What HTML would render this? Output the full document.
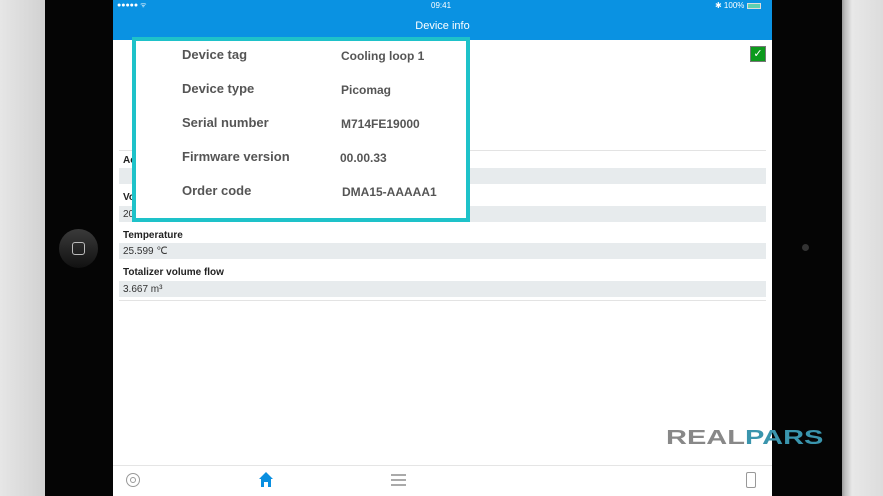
<!DOCTYPE html>
<html><head><style>
*{margin:0;padding:0;box-sizing:border-box}
body{width:883px;height:496px;overflow:hidden;position:relative;background:#d8d8d8;font-family:"Liberation Sans",sans-serif}
.bgl{position:absolute;left:0;top:0;width:50px;height:496px;background:linear-gradient(90deg,#e6e6e6,#cfcfcf)}
.bgr{position:absolute;left:842px;top:0;width:41px;height:496px;background:linear-gradient(90deg,#9a9a9a 0,#bdbdbd 3px,#e8e8e8 10px,#dcdcdc)}
.bez{position:absolute;left:45px;top:0;width:797px;height:496px;background:#050505}
.scr{position:absolute;left:113px;top:0;width:659px;height:496px;background:#fff;overflow:hidden}
.hdr{position:absolute;left:0;top:0;width:659px;height:40px;background:#0a92e2;color:#fff}
.lbl{position:absolute;left:10px;font-size:10px;color:#222;font-weight:bold}
.fld{position:absolute;left:6px;width:647px;height:16px;background:#e7ebed;font-size:10px;color:#333;padding:3px 4px}
.box{position:absolute;left:132px;top:37px;width:338px;height:185px;border:4px solid #1ec2c9;background:#fff}
.box div{position:absolute;font-size:13px;font-weight:bold;color:#555}
</style></head><body>
<div class="bgl"></div><div class="bgr"></div><div class="bez"></div>
<div style="position:absolute;left:59px;top:229px;width:39px;height:39px;border-radius:50%;background:linear-gradient(#3a3a3a,#111);"></div>
<div style="position:absolute;left:72px;top:242px;width:13px;height:13px;border:1.5px solid #bbb;border-radius:3px"></div>
<div style="position:absolute;left:802px;top:244px;width:7px;height:7px;border-radius:50%;background:#333"></div>
<div class="scr">
<div class="hdr">
<div style="position:absolute;left:4px;top:1px;font-size:7px">●●●●● ᯤ</div>
<div style="position:absolute;left:318px;top:1px;font-size:8px">09:41</div>
<div style="position:absolute;left:602px;top:1px;font-size:8px">✱ 100% <span style="display:inline-block;width:14px;height:6px;background:#5fd0b0;border:1px solid #ddd;vertical-align:middle"></span></div>
<div style="position:absolute;left:0;width:659px;top:20px;text-align:center;font-size:11px">Device info</div>
</div>
<div style="position:absolute;left:637px;top:46px;width:16px;height:16px;background:#0c9a1c;border:1px solid #777;color:#fff;font-size:11px;text-align:center;line-height:14px">✓</div>
<div style="position:absolute;left:6px;top:150px;width:647px;height:1px;background:#e3e3e3"></div>
<div class="lbl" style="top:155px">Ac</div><div class="fld" style="top:168px"></div>
<div class="lbl" style="top:192px">Vo</div><div class="fld" style="top:206px">20</div>
<div class="lbl" style="top:230px">Temperature</div><div class="fld" style="top:243px">25.599 ℃</div>
<div class="lbl" style="top:267px">Totalizer volume flow</div><div class="fld" style="top:281px">3.667 m³</div>
<div style="position:absolute;left:6px;top:300px;width:647px;height:1px;background:#e3e3e3"></div>
<div style="position:absolute;left:0;top:465px;width:659px;height:1px;background:#e5e5e5"></div>
<div style="position:absolute;left:13px;top:473px;width:14px;height:14px;border:1.5px solid #999;border-radius:50%"></div>
<div style="position:absolute;left:17px;top:477px;width:6px;height:6px;border:1.5px solid #999;border-radius:50%"></div>
<svg style="position:absolute;left:146px;top:472px" width="14" height="15"><path d="M7 0L0 7h2v8h3v-5h4v5h3V7h2z" fill="#0a8fe0"/></svg>
<div style="position:absolute;left:278px;top:474px;width:15px;height:2px;background:#aaa;box-shadow:0 5px 0 #aaa,0 10px 0 #aaa"></div>
<div style="position:absolute;left:633px;top:472px;width:10px;height:16px;border:1.5px solid #999;border-radius:2px"></div>
</div>
<div style="position:absolute;left:666px;top:428px;font-size:20px;line-height:20px;font-weight:bold;white-space:nowrap;transform-origin:0 0;transform:scaleX(1.45)"><span style="color:#888">REAL</span><span style="color:#3a95ad">PARS</span></div>
<div class="box">
<div style="left:46px;top:6px">Device tag</div><div style="left:205px;top:8px;font-size:12px">Cooling loop 1</div>
<div style="left:46px;top:40px">Device type</div><div style="left:205px;top:42px;font-size:12px">Picomag</div>
<div style="left:46px;top:74px">Serial number</div><div style="left:205px;top:76px;font-size:12px">M714FE19000</div>
<div style="left:46px;top:108px">Firmware version</div><div style="left:204px;top:110px;font-size:12px">00.00.33</div>
<div style="left:46px;top:142px">Order code</div><div style="left:206px;top:144px;font-size:12px">DMA15-AAAAA1</div>
</div>
</body></html>
